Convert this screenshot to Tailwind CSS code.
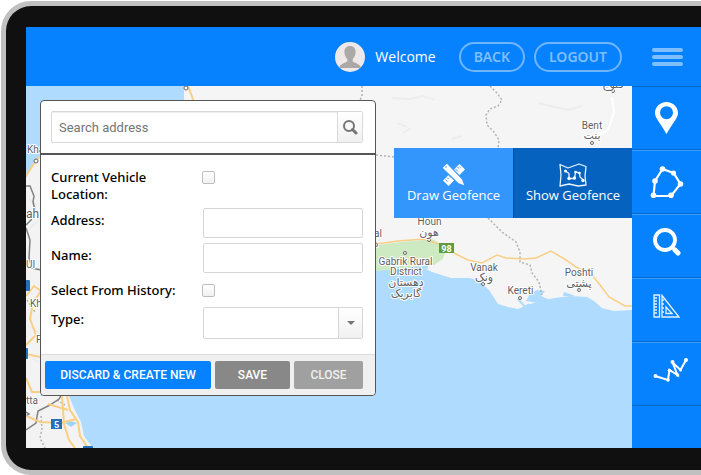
<!DOCTYPE html>
<html lang="en">
<head>
<meta charset="utf-8">
<meta name="viewport" content="width=device-width, initial-scale=1">
<title>Geofence</title>
<script src="https://cdn.jsdelivr.net/npm/@tailwindcss/browser@4"></script>
</head>
<body class="bg-white font-['Open_Sans',sans-serif]">
<div class="flex min-h-screen overflow-hidden pt-px pl-px">
  <div class="flex grow flex-col rounded-l-[30px] border-5 border-r-0 border-[#c0c0c0] bg-[#101010] pt-[21px] pb-[22px] pl-5">
    <header class="flex h-[59px] items-center justify-end bg-[#0782ff] pr-[18px]">
      <svg class="size-[30px]" viewBox="0 0 30 30" aria-hidden="true">
        <circle cx="15" cy="15" r="15" fill="#eee9e8"/>
        <path d="M15 4c-3.700 0-5.800 2.600-5.600 6.300.1 2.700 1.300 5.300 2.900 6.600v2.500c-2.200 1.500-7.300 2-8.300 6.600h22c-1-4.600-6.100-5.100-8.300-6.600v-2.500c1.600-1.300 2.800-3.900 2.900-6.600C20.800 6.600 18.700 4 15 4z" fill="#aaa9a8"/>
      </svg>
      <span class="ml-[10px] text-sm text-white">Welcome</span>
      <button type="button" class="ml-[23px] h-[30px] rounded-full border-2 border-[#6fb6ff] px-[13px] font-['Noto_Sans',sans-serif] text-sm leading-none font-semibold text-[#7fbeff]">BACK</button>
      <button type="button" class="ml-[9px] h-[30px] rounded-full border-2 border-[#6fb6ff] px-[13px] font-['Noto_Sans',sans-serif] text-sm leading-none font-semibold text-[#7fbeff]">LOGOUT</button>
      <button type="button" aria-label="Menu" class="ml-[30px] flex w-[31px] flex-col gap-[3px]">
        <span class="h-1 rounded-full bg-[#7fbeff]"></span>
        <span class="h-1 rounded-full bg-[#7fbeff]"></span>
        <span class="h-1 rounded-full bg-[#7fbeff]"></span>
      </button>
    </header>

    <div class="flex grow">
      <main class="relative grow overflow-hidden bg-[#aadaff]">
        <svg class="absolute inset-0 size-full" viewBox="26 86 606 362" preserveAspectRatio="xMinYMin slice" font-family="Roboto, 'Noto Sans', 'DejaVu Sans', sans-serif">
          <rect x="26" y="86" width="606" height="362" fill="#aedbfe"/>
          <!-- land -->
          <path d="M184 86H632V310L614 311 602 308 594 301 587 297 570 296 555 298 540 301 527 305 518 309 508 307 498 304 489 290 479 281 470 278 451 278 432 272 420 266H370V200H184z" fill="#f5f5f5"/>
          <path d="M26 178L33 164 41 156V396H69L74 408 81 422 84 436 93 448H26z" fill="#f3f3f3"/>
          <path d="M65 423l6-2 6 2-6 4z" fill="#9ed4f5"/>
          <g fill="none" stroke="#ededed" stroke-width="2">
            <path d="M392 98l17 1 14-3 12 4M397 123l10 4M538 103l30 7 14-4M403 133l8-5M452 139l10-3M29 198l8 8M29 229l9-8M29 326l9 6M31 357l8 5M30 418l13-7"/>
          </g>
          <path d="M612 97l2 15-4 13-3 6-14 5" fill="none" stroke="#fff" stroke-width="2"/>
          <!-- coastal reserve -->
          <path d="M370 246l22-3 40-4 9 5 5 6-3 9-9 6-12 1-23 4-29 1z" fill="#cdeac3"/>
          <path d="M376 273l26-3 26-3" stroke="#aedbfe" stroke-width="3" fill="none"/>
          <path d="M526 301l4-7 7-4 8 1-4 5 9 4-12 3zM563 296l1-4 6 2 5 2z" fill="#aedbfe"/>
          <path d="M518 299l7 8 4-3" stroke="#aedbfe" stroke-width="2" fill="none"/>
          <!-- borders -->
          <g fill="none" stroke="#b2b2b2" stroke-width="1.500" stroke-dasharray="2 2">
            <path d="M490 86l7 7 5 7-4 6-8 3-4 6 1 10 7 7 5 8-1 8M362 86v10l-3 6M376 155l18 2M488 218l14 14 14 10 4 10v10l10 3 2 8 7 9 3 13"/>
            <path d="M41 416l1 12-2 10 5 10M27 300l8 12M57 400l8 5"/>
          </g>
          <g fill="none" stroke="#808080" stroke-width="1.500">
            <path d="M26 186h4l4 10-1 6 2 8-4 10-5 5M26 228l4 12-1 18 3 10 9 2M26 430l10-7 2-12 12-6 9-6 5-8M26 412l3 2-3 2"/>
          </g>
          <!-- roads -->
          <g fill="none" stroke="#f8cf85" stroke-width="2">
            <path d="M188 86l6 16M26 176l7-11 7-9M26 296l8-10 7 5-8 12-3 16 6 16-10 10M26 354l14 3M26 378l6 14h8M26 416l14 6 20 1 16-4M62 396l2 28 5 16 6 8M67 396l3 14 8 12 2 14 8 12M48 404l20 6"/>
            <path d="M376 244l22-3 26-2 20 7 12 8 12 6 14 3 15-8 9 3 18 1 12-1 15-7 15 9 10 7 16 8 8 10 9 12 16 9h25" stroke-width="1.500"/>
          </g>
          <!-- road shields -->
          <g font-size="9" font-weight="700" fill="#fff" text-anchor="middle">
            <rect x="439" y="243" width="15" height="10" fill="#629a3c"/><text x="446.500" y="251.500">98</text>
            <rect x="51" y="419" width="11" height="10" fill="#2470bd"/><text x="56.500" y="427.500">5</text>
            <rect x="24" y="280" width="6" height="11" rx="1" fill="#2470bd"/><rect x="24" y="348" width="4" height="11" rx="1" fill="#2470bd"/><rect x="83" y="446" width="10" height="6" rx="1" fill="#2470bd"/>
          </g>
          <!-- town markers -->
          <g fill="#fff" stroke="#666" stroke-width="1">
            <circle cx="613" cy="91" r="1.500"/><circle cx="592" cy="143" r="1.500"/><circle cx="429" cy="240" r="1.500"/><circle cx="405" cy="253" r="1.500"/><circle cx="483" cy="284" r="1.500"/><circle cx="520" cy="298" r="1.500"/><circle cx="579" cy="290" r="1.500"/><circle cx="186" cy="88" r="2"/><circle cx="36" cy="161" r="2"/>
          </g>
          <!-- place names -->
          <g font-size="10" fill="#5f5f5f" text-anchor="middle" stroke="#fff" stroke-width="2" stroke-linejoin="round" paint-order="stroke">
            <text x="592" y="129">Bent</text><text x="613" y="88" font-size="11">فنوج</text>
            <text x="429.500" y="225">Houn</text>
            <text x="405.500" y="265">Gabrik Rural</text><text x="406" y="275">District</text>
            <text x="484" y="271">Vanak</text>
            <text x="520.500" y="294">Kereti</text>
            <text x="579" y="276">Poshti</text>
            <g font-size="11">
              <text x="592" y="139">بنت</text><text x="429" y="236">هون</text><text x="406" y="286">دهستان</text><text x="406" y="297">گابریک</text><text x="484" y="281">ونک</text><text x="579" y="287">پشتی</text>
            </g>
            <g text-anchor="start">
              <text x="374" y="237">al</text><text x="374" y="247">د</text>
              <text x="27" y="153">Kha</text><text x="26" y="218" font-size="12">ah</text><text x="26" y="268">UI</text>
              <text x="30" y="307">Kh</text><text x="36" y="343">Fu</text><text x="26" y="404">tta</text>
            </g>
          </g>
        </svg>

        <form class="absolute top-[14px] left-[14px] w-[336px] rounded-sm border border-[#555] bg-white font-['Noto_Sans',sans-serif] text-[13px] leading-[17px] font-medium text-black">
          <div class="border-b-2 border-[#555] p-[10px] pr-3">
            <div class="flex h-8 overflow-hidden rounded-xs border border-[#d9d9d9] font-['Roboto',sans-serif] font-normal">
              <input type="search" aria-label="Search address" placeholder="Search address" class="w-0 grow px-[7px] text-[13px] shadow-[inset_0_1px_1px_#eee] outline-none placeholder:text-[#757575]">
              <button type="button" aria-label="Search" class="flex w-[25px] items-center justify-center border-l border-[#d9d9d9] bg-linear-to-b from-white to-[#f1f1f1]">
                <svg class="size-4" viewBox="0 0 16 16" fill="none" stroke="#757575"><circle cx="7" cy="7" r="5" stroke-width="2"/><path d="M10.500 10.500l3.500 3.500" stroke-width="3" stroke-linecap="round"/></svg>
              </button>
            </div>
          </div>

          <div class="grid grid-cols-[152px_1fr] gap-y-[5px] pt-[14px] pr-3 pb-[15px] pl-[10px]">
            <label for="current" class="w-32">Current Vehicle Location:</label>
            <input id="current" type="checkbox" class="mt-[2px] -ml-px size-[13px] appearance-none rounded-xs border border-[#bdbdbd] bg-linear-to-b from-white to-[#f1f1f1] checked:bg-[#0782ff]">
            <label for="address" class="pt-1">Address:</label>
            <input id="address" type="text" class="h-[30px] w-full rounded-xs border border-[#d5d5d5] px-2 outline-none">
            <label for="name" class="pt-1">Name:</label>
            <input id="name" type="text" class="h-[30px] w-full rounded-xs border border-[#d5d5d5] px-2 outline-none">
            <label for="history" class="pt-1 pb-[3px]">Select From History:</label>
            <input id="history" type="checkbox" class="-ml-px size-[13px] appearance-none self-center rounded-xs border border-[#bdbdbd] bg-linear-to-b from-white to-[#f1f1f1] checked:bg-[#0782ff]">
            <label for="type" class="pt-1">Type:</label>
            <div class="relative h-8">
              <select id="type" class="size-full appearance-none rounded-xs border border-[#d5d5d5] bg-white px-2 outline-none"><option></option></select>
              <span class="pointer-events-none absolute inset-y-px right-px flex w-6 items-center justify-center border-l border-[#d5d5d5] bg-linear-to-b from-white to-[#f1f1f1]">
                <svg class="h-1 w-2" viewBox="0 0 8 4"><path d="M0 0h8L4 4z" fill="#757575"/></svg>
              </span>
            </div>
          </div>

          <div class="flex gap-1 rounded-b-sm border-t border-[#dcdcdc] bg-[#f0f0f0] pt-[6px] pr-3 pb-[6px] pl-1 font-['Roboto',sans-serif] text-xs font-medium text-white">
            <button type="submit" class="h-7 w-[166px] rounded-xs bg-[#0782ff]">DISCARD &amp; CREATE NEW</button>
            <button type="button" class="h-7 w-[75px] rounded-xs bg-[#888]">SAVE</button>
            <button type="button" class="h-7 grow rounded-xs bg-[#a0a0a0] text-[#f0f0f0]">CLOSE</button>
          </div>
        </form>

        <div class="absolute top-[62px] right-0 grid h-[70px] w-[238px] grid-cols-2 text-[13px] leading-[17px] text-white">
          <button type="button" class="flex flex-col items-center bg-[#3396fc] pt-[15px]">
            <svg class="size-6" viewBox="0 0 24 24" fill="#fff">
              <path d="M17.500 1L23 6.500 6.500 23 1 17.500z"/>
              <path d="M15.500 4l1.500 1.500M13.500 6l2.500 2.500M18.500 4.500l-1-1M7 12.500l2 2M5 14.500l1.500 1.500M3.500 16.500l2 2" stroke="#3396fc" fill="none"/>
              <path d="M.8 3.800L3.800.8c.8-.6 2-.4 2.500.5L20.500 16l2.700 7.200-7.200-2.700L1.300 6.300C.4 5.800.2 4.600.8 3.800z" stroke="#3396fc" stroke-width="1.200"/>
              <circle cx="4" cy="4" r=".8" fill="#3396fc"/>
            </svg>
            <span>Draw Geofence</span>
          </button>
          <button type="button" class="flex flex-col items-center border-l border-[#044f9c] bg-[#0563bf] pt-[15px]">
            <svg class="h-6 w-7" viewBox="0 0 28 24" fill="none" stroke="#e8f4ff" stroke-width="1.300" stroke-linejoin="round">
              <path d="M1 1.500l8 3.500 11-4 7 2.500-1 9.500 1 9-8 1-9-2-9 2 1-11z"/>
              <path d="M6.500 8l3.500 2.500v5h5.500l1-6.500 4 1 .5 4 3.500 3"/>
              <g fill="#fff" stroke="none"><circle cx="6.500" cy="8" r="1.500"/><circle cx="10" cy="15.500" r="1.700"/><circle cx="15.500" cy="15" r="1.700"/><circle cx="16.500" cy="9" r="1.300"/><circle cx="20.500" cy="10" r="1.300"/><circle cx="24" cy="17.500" r="1.700"/></g>
            </svg>
            <span>Show Geofence</span>
          </button>
        </div>
      </main>

      <nav aria-label="Map tools" class="flex w-[69px] shrink-0 flex-col bg-[#0782ff]">
        <button type="button" aria-label="Location" class="flex h-16 items-center justify-center border-t border-b border-t-[#0568cc] border-b-[#0568cc]">
          <svg class="h-8 w-[23px]" viewBox="0 0 23 32"><path fill-rule="evenodd" fill="#fff" d="M11.500 0C5 0 0 5 0 11c0 5 5 9.500 11.500 21C18 20.500 23 16 23 11 23 5 18 0 11.500 0zm0 4.200a6.500 6.500 0 1 1 0 13 6.500 6.500 0 0 1 0-13z"/></svg>
        </button>
        <button type="button" aria-label="Polygon" class="flex h-16 items-center justify-center border-t border-b border-t-[#3c9dff] border-b-[#0568cc]">
          <svg class="h-8 w-[34px]" viewBox="0 0 34 32" fill="#fff"><path d="M12.500 3l11 4 7 11-9.500 12H3.500L5 15z" fill="none" stroke="#fff" stroke-width="2.200"/><circle cx="12.500" cy="3" r="2.800"/><circle cx="23.500" cy="7" r="2.600"/><circle cx="30.500" cy="18" r="2.800"/><circle cx="21" cy="29.200" r="2.800"/><circle cx="3.500" cy="29.200" r="2.800"/><circle cx="5" cy="15" r="2.800"/></svg>
        </button>
        <button type="button" aria-label="Find" class="flex h-16 items-center justify-center border-t border-b border-t-[#3c9dff] border-b-[#0568cc] pb-2">
          <svg class="size-7" viewBox="0 0 28 28" fill="none" stroke="#fff"><circle cx="12" cy="12" r="10" stroke-width="3.800"/><path d="M19.500 19.500l2 2" stroke-width="3"/><path d="M22 22l3 3" stroke-width="5" stroke-linecap="round"/></svg>
        </button>
        <button type="button" aria-label="Measure" class="flex h-16 items-center justify-center border-t border-b border-t-[#3c9dff] border-b-[#0568cc] pb-2">
          <svg class="h-6 w-[27px]" viewBox="0 0 27 24" fill="none" stroke="#e4f2ff" stroke-width="1.300"><path d="M1 1h5.500v22H1zM1 4h3M1 7h3M1 10h3M1 13h3M1 16h3M1 19h3M9 1.500L26 23H9z"/><path d="M13 13l6 6.500h-6zM9 6h2M9 10h2M9 14h2M9 18h2" /></svg>
        </button>
        <button type="button" aria-label="Route" class="flex h-16 items-center justify-center border-t border-b border-t-[#3c9dff] border-b-[#0568cc] pb-2 pl-2">
          <svg class="h-6 w-[35px]" viewBox="0 0 35 24" fill="#fff"><path d="M2 18l13 4 1.500-10 8 5-5-12.500L27.500 12 33 2" fill="none" stroke="#fff" stroke-width="2"/><circle cx="2.500" cy="18" r="2"/><circle cx="15" cy="22" r="1.800"/><circle cx="16.500" cy="12.500" r="1.800"/><circle cx="24.500" cy="17" r="1.800"/><circle cx="19.500" cy="4" r="2"/><circle cx="27.500" cy="12" r="1.500"/><circle cx="33" cy="2" r="2"/></svg>
        </button>
      </nav>
    </div>
  </div>
</div>
</body>
</html>
